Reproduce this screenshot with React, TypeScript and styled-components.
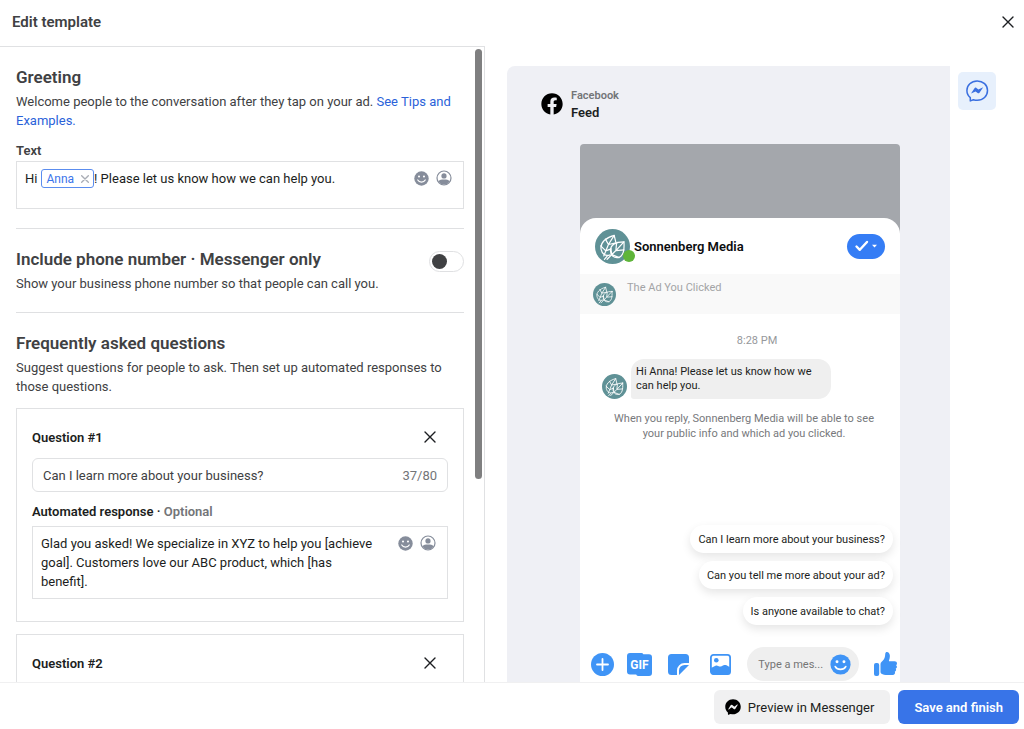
import React from "react";
import styled, { createGlobalStyle } from "styled-components";
import { FaFacebook, FaFacebookMessenger } from "react-icons/fa";

const GlobalStyle = createGlobalStyle`
  *, *::before, *::after { box-sizing: border-box; }
  body {
    margin: 0;
    background: #fff;
    color: #404143;
    font-family: Roboto, "Liberation Sans", sans-serif;
    font-size: 13px;
    line-height: 19px;
  }
  h1, h2, h3, p { margin: 0; }
  button, input, textarea { font: inherit; color: inherit; }
  svg { display: block; flex: none; }
`;

const Page = styled.div`
  display: flex;
  flex-direction: column;
  height: 100vh;
`;

const Header = styled.header`
  flex: none;
  display: flex;
  align-items: center;
  justify-content: space-between;
  height: 46px;
  padding: 0 8px 3px 12px;
`;

const Title = styled.h1`
  font-size: 15px;
  font-weight: 600;
  line-height: 20px;
`;

const IconButton = styled.button<{ $size?: number; $color?: string }>`
  flex: none;
  display: flex;
  align-items: center;
  justify-content: center;
  width: ${(p) => p.$size ?? 16}px;
  height: ${(p) => p.$size ?? 16}px;
  padding: 0;
  border: 0;
  background: none;
  color: ${(p) => p.$color ?? "#1c1e21"};
  cursor: pointer;
`;

const Main = styled.main`
  flex: 1;
  min-height: 0;
  display: grid;
  grid-template-columns: 9fr 10fr;
`;

const EditorPane = styled.div`
  display: flex;
  min-height: 0;
  overflow: hidden;
  border-top: 1px solid #e0e1e3;
  border-right: 1px solid #e0e1e3;
`;

const EditorScroll = styled.form`
  flex: 1;
  min-width: 0;
  overflow: hidden;
  padding: 0 11px 0 16px;
`;

const ScrollTrack = styled.div`
  flex: none;
  width: 9px;
  padding: 2px 2px 0 0;
`;

const ScrollThumb = styled.div`
  height: 68%;
  border-radius: 4px;
  background: #7f7f80;
`;

const Section = styled.section`
  padding: 20px 0 19px;
  & + & { border-top: 1px solid #dfe0e2; }
`;

const SectionTitle = styled.h2`
  display: block;
  margin-bottom: 4px;
  font-size: 17px;
  font-weight: 600;
  line-height: 21px;
`;

const TitleRow = styled.div`
  display: flex;
  align-items: flex-start;
  justify-content: space-between;
`;

const Link = styled.a`
  color: #2a62d9;
  text-decoration: none;
`;

const FieldLabel = styled.label<{ $inCard?: boolean }>`
  display: block;
  margin: ${(p) => (p.$inCard ? "10px 0 5px" : "11px 0 1px")};
  font-weight: 600;
  color: ${(p) => (p.$inCard ? "#1c1e21" : "inherit")};
`;

const Muted = styled.span`
  color: #737578;
`;

const TextBox = styled.div<{ $height: number }>`
  display: flex;
  align-items: flex-start;
  min-height: ${(p) => p.$height}px;
  padding: 7px 11px 7px 8px;
  border: 1px solid #e0e1e3;
  color: #1c1e21;
`;

const BareInput = styled.input`
  flex: 1;
  min-width: 0;
  height: 18px;
  padding: 0;
  border: 0;
  outline: 0;
  background: none;
`;

const BareTextarea = styled.textarea`
  flex: 1;
  min-width: 0;
  height: 57px;
  padding: 0;
  border: 0;
  outline: 0;
  resize: none;
  overflow: hidden;
`;

const Chip = styled.button`
  display: flex;
  align-items: center;
  gap: 7px;
  height: 19px;
  margin-left: 4px;
  padding: 0 4px;
  border: 1px solid #5b8def;
  border-radius: 3px;
  background: #fff;
  color: #3b74ea;
  font-size: 12px;
  line-height: 16px;
  svg { color: #a9adb5; }
`;

const BoxTools = styled.div`
  display: flex;
  gap: 7px;
  padding: 1px 0 0 18px;
`;

const Switch = styled.input`
  appearance: none;
  flex: none;
  width: 35px;
  height: 21px;
  margin: 2px 0 0;
  padding: 2px;
  border: 1px solid #dfe0e2;
  border-radius: 11px;
  background: #fff;
  &::before {
    content: "";
    display: block;
    width: 15px;
    height: 15px;
    border-radius: 50%;
    background: #404143;
  }
  &:checked::before { margin-left: auto; }
`;

const Card = styled.fieldset`
  min-width: 0;
  margin: 12px 0 0;
  padding: 16px 15px 22px;
  border: 1px solid #e0e1e3;
`;

const CardHead = styled.div`
  display: flex;
  align-items: center;
  justify-content: space-between;
  height: 24px;
  margin-bottom: 9px;
  padding-right: 10px;
`;

const CardTitle = styled.h3`
  font-size: 13px;
  font-weight: 600;
  color: #1c1e21;
`;

const InputFrame = styled.div`
  display: flex;
  align-items: center;
  height: 34px;
  padding: 0 10px;
  border: 1px solid #e0e1e3;
  border-radius: 6px;
`;

const PreviewPane = styled.div`
  display: flex;
  gap: 8px;
  min-height: 0;
  overflow: hidden;
  padding: 20px 28px 0 22px;
`;

const Preview = styled.section`
  flex: 1;
  min-width: 0;
  display: flex;
  flex-direction: column;
  border-radius: 8px 0 0 0;
  background: #eff0f5;
`;

const Placement = styled.div`
  display: flex;
  align-items: center;
  gap: 8px;
  padding: 21px 34px 23px;
  color: #1c1e21;
  font-weight: 600;
  line-height: 17px;
`;

const PlacementApp = styled.p`
  font-size: 11px;
  color: #737578;
`;

const Phone = styled.div`
  flex: 1;
  min-height: 0;
  display: flex;
  flex-direction: column;
  margin: 0 50px 0 73px;
  padding-top: 74px;
  border-radius: 4px 4px 0 0;
  background: #a4a7ac;
`;

const Sheet = styled.div`
  flex: 1;
  min-height: 0;
  display: flex;
  flex-direction: column;
  border-radius: 16px 16px 0 0;
  background: #fff;
  font-size: 11px;
  line-height: 15px;
`;

const ChatHead = styled.div`
  display: flex;
  align-items: center;
  gap: 4px;
  height: 56px;
  padding: 0 15px;
`;

const ChatName = styled.h2`
  flex: 1;
  font-size: 13px;
  font-weight: 600;
  color: #0c0d0f;
`;

const AvatarHolder = styled.div`
  position: relative;
`;

const OnlineDot = styled.span`
  position: absolute;
  right: -5px;
  bottom: 2px;
  width: 12px;
  height: 12px;
  border-radius: 50%;
  background: #5fb53a;
`;

const CheckButton = styled.button`
  display: flex;
  align-items: center;
  justify-content: center;
  width: 38px;
  height: 25px;
  padding: 0;
  border: 0;
  border-radius: 13px;
  background: #357df5;
`;

const AdStrip = styled.div`
  display: flex;
  gap: 11px;
  height: 40px;
  padding: 6px 13px;
  background: #f9f9f9;
  color: #a3a4a6;
`;

const StripAvatar = styled.div`
  padding-top: 3px;
`;

const Time = styled.p`
  padding: 19px 0 11px 34px;
  text-align: center;
  color: #96989b;
`;

const MessageRow = styled.div`
  display: flex;
  align-items: flex-end;
  gap: 4px;
  padding-left: 22px;
`;

const Bubble = styled.p`
  width: 200px;
  padding: 6px 12px 6px 5px;
  border-radius: 13px 13px 13px 3px;
  background: #efefef;
  color: #1c1e21;
  line-height: 14px;
`;

const Notice = styled.p`
  padding: 12px 20px 0 28px;
  text-align: center;
  color: #77797c;
`;

const Replies = styled.div`
  display: flex;
  flex-direction: column;
  align-items: flex-end;
  gap: 8px;
  margin-top: auto;
  padding: 0 7px 22px 0;
`;

const Reply = styled.button`
  height: 28px;
  padding: 0 8px;
  border: 0;
  border-radius: 14px;
  background: #fff;
  color: #1c1e21;
  box-shadow: 0 4px 10px rgba(0, 0, 0, 0.1);
`;

const Composer = styled.div`
  display: flex;
  align-items: center;
  justify-content: space-between;
  padding: 0 3px 1px 11px;
`;

const MessageField = styled.label`
  display: flex;
  align-items: center;
  gap: 4px;
  width: 112px;
  height: 34px;
  padding: 0 8px 0 11px;
  border-radius: 17px;
  background: #efefef;
  color: #77797c;
`;

const ChannelTab = styled.button`
  flex: none;
  display: flex;
  align-items: center;
  justify-content: center;
  width: 38px;
  height: 38px;
  margin-top: 6px;
  padding: 0;
  border: 0;
  border-radius: 5px;
  background: #e7f0fc;
  color: #3a6fe0;
`;

const Footer = styled.footer`
  flex: none;
  display: flex;
  justify-content: flex-end;
  gap: 8px;
  height: 47px;
  padding: 7px 5px 0;
  border-top: 1px solid #f0f0f1;
`;

const ActionButton = styled.button<{ $primary?: boolean }>`
  display: flex;
  align-items: center;
  gap: 7px;
  height: 34px;
  padding: ${(p) => (p.$primary ? "0 16px" : "0 16px 0 11px")};
  border: 0;
  border-radius: 6px;
  background: ${(p) => (p.$primary ? "#3874e8" : "#f0f0f1")};
  color: ${(p) => (p.$primary ? "#fff" : "#1c1e21")};
  font-weight: ${(p) => (p.$primary ? 600 : 400)};
  cursor: pointer;
`;

const CloseIcon = ({ size = 12 }: { size?: number }) => (
  <svg width={size} height={size} viewBox="0 0 12 12" fill="none" stroke="currentColor" strokeWidth={size < 12 ? 2 : 1.4} strokeLinecap="round">
    <path d="M1 1l10 10M11 1L1 11" />
  </svg>
);

const SmileIcon = ({ size = 15 }: { size?: number }) => (
  <svg width={size} height={size} viewBox="0 0 20 20">
    <circle cx="10" cy="10" r="9.6" fill="currentColor" />
    <circle cx="6.7" cy="7.4" r="1.4" fill="#fff" />
    <circle cx="13.3" cy="7.4" r="1.4" fill="#fff" />
    <path d="M5 12c2 3.6 8 3.6 10 0" fill="none" stroke="#fff" strokeWidth="1.6" strokeLinecap="round" />
  </svg>
);

const PersonIcon = () => (
  <svg width="16" height="16" viewBox="0 0 16 16">
    <circle cx="8" cy="8" r="7" fill="none" stroke="currentColor" strokeWidth="1.2" />
    <circle cx="8" cy="5.9" r="2.6" fill="currentColor" />
    <path d="M2.6 11.2c1-1.2 2.8-1.6 5.4-1.6s4.4.4 5.4 1.6A6.4 6.4 0 0 1 8 14.6a6.4 6.4 0 0 1-5.4-3.4z" fill="currentColor" />
  </svg>
);

const Avatar = ({ size }: { size: number }) => (
  <svg width={size} height={size} viewBox="0 0 104 104">
    <circle cx="52" cy="52" r="52" fill="#5f9196" />
    <g fill="none" stroke="#fff" strokeWidth="3.6" strokeLinejoin="round" strokeLinecap="round">
      <path d="M45 77c-14 5-24-2-27-17-2-17 9-32 39-41l5 21" />
      <path d="M57 19L40 46 26 80M31 30l9 16 20-4M17 50l15 15 16-6" />
      <path d="M86 38c-24 0-40 9-40 26 0 14 10 23 23 21 14-3 19-19 17-47z" />
      <path d="M86 38L62 64 36 90M64 43l-2 21 24-2M47 58l3 18 22 9M28 90l8-9" />
    </g>
  </svg>
);

const MessengerOutline = () => (
  <svg width="24" height="24" viewBox="0 0 24 24">
    <path d="M12.2 1.9C6.300 1.900 1.900 6.100 1.900 11.500c0 2.900 1.300 5.400 3.400 7.100v3.300l3.100-1.200c1.200.4 2.500.6 3.800.6 5.900 0 10.300-4.300 10.300-9.800S18.100 1.900 12.200 1.900z" fill="none" stroke="currentColor" strokeWidth="1.5" strokeLinejoin="round" />
    <path d="M6 14.600l3.500-5.400c.5-.7 1.300-.8 1.900-.3l2 1.600 4.800-2.300-3.700 5.500c-.5.7-1.300.8-1.900.3l-2-1.600z" fill="currentColor" />
  </svg>
);

const PlusIcon = () => (
  <svg width="23" height="23" viewBox="0 0 23 23">
    <circle cx="11.5" cy="11.5" r="11.5" fill="#3f94f6" />
    <path d="M11.5 6v11M6 11.5h11" stroke="#fff" strokeWidth="1.8" strokeLinecap="round" />
  </svg>
);

const GifIcon = () => (
  <svg width="25" height="23" viewBox="0 0 25 23">
    <path d="M3 0h11.500a2 2 0 0 1 1.800 1.300H22a3 3 0 0 1 3 3V20a3 3 0 0 1-3 3H11a2 2 0 0 1-1.800-1.500H3a3 3 0 0 1-3-3V3a3 3 0 0 1 3-3z" fill="#3f94f6" />
    <text x="12.5" y="16" textAnchor="middle" fill="#fff" fontFamily="Roboto, sans-serif" fontSize="12" fontWeight="700">GIF</text>
  </svg>
);

const StickerIcon = () => (
  <svg width="21" height="21" viewBox="0 0 21 21" fill="#3f94f6">
    <path d="M3.500 0h14A3.500 3.500 0 0 1 21 3.500V9h-4.500A7.500 7.500 0 0 0 9 16.500V21H3.500A3.500 3.500 0 0 1 0 17.500v-14A3.500 3.500 0 0 1 3.500 0z" />
    <path d="M21 11h-4.500a5.500 5.500 0 0 0-5.500 5.500V21z" />
  </svg>
);

const PhotoIcon = () => (
  <svg width="21" height="21" viewBox="0 0 21 21">
    <rect x="0.9" y="0.9" width="19.2" height="19.2" rx="2.6" fill="#fff" stroke="#3f94f6" strokeWidth="1.8" />
    <circle cx="6.3" cy="6.3" r="2.3" fill="#3f94f6" />
    <path d="M1 14l4.500-2.200c1-.5 1.800-.3 2.700.2 1.300.8 2.500.8 3.800.1l1.500-.8c1-.5 2-.5 3 0L20 13.200v5.300a2 2 0 0 1-2 2H3a2 2 0 0 1-2-2z" fill="#3f94f6" />
  </svg>
);

const ThumbIcon = () => (
  <svg width="23" height="24" viewBox="0 0 23 24" fill="#3f94f6">
    <rect x="0" y="11" width="5.2" height="13" rx="2" />
    <path d="M6.500 12c0-1 .4-1.700 1.200-2.300C9.600 8.200 10.700 6.500 11 4.200l.3-2.600C11.400.5 12 0 12.900 0c1.800 0 3 1.800 3 4 0 1.700-.4 3-.9 4.400-.2.600.1.900.6.900h5c1.400 0 2.400.9 2.400 2.100 0 .8-.3 1.400-.9 1.800.6.400.8 1 .8 1.600 0 .9-.5 1.600-1.200 1.900.4.400.5.900.4 1.400-.1.800-.6 1.300-1.300 1.600.2.400.3.800.2 1.200-.2 1.400-1.300 2.100-3 2.100h-4.200c-3 0-5-.5-6.300-1.300-.7-.4-1-1-1-1.800z" />
  </svg>
);

const FieldTools = () => (
  <BoxTools>
    <IconButton type="button" $color="#868d9b" aria-label="Add emoji"><SmileIcon /></IconButton>
    <IconButton type="button" $color="#868d9b" aria-label="Add name"><PersonIcon /></IconButton>
  </BoxTools>
);

const Question = ({ number, question, response }: { number: number; question: string; response: string }) => (
  <Card aria-labelledby={`q${number}-title`}>
    <CardHead>
      <CardTitle id={`q${number}-title`}>Question #{number}</CardTitle>
      <IconButton type="button" aria-label={`Remove question ${number}`}><CloseIcon /></IconButton>
    </CardHead>
    <InputFrame>
      <BareInput aria-label={`Question ${number}`} defaultValue={question} />
      <Muted>{question.length}/80</Muted>
    </InputFrame>
    <FieldLabel $inCard htmlFor={`q${number}-response`}>
      Automated response · <Muted>Optional</Muted>
    </FieldLabel>
    <TextBox $height={73}>
      <BareTextarea id={`q${number}-response`} defaultValue={response} />
      <FieldTools />
    </TextBox>
  </Card>
);

const replies = [
  "Can I learn more about your business?",
  "Can you tell me more about your ad?",
  "Is anyone available to chat?",
];

export default function App() {
  return (
    <Page>
      <GlobalStyle />
      <Header>
        <Title>Edit template</Title>
        <IconButton aria-label="Close"><CloseIcon /></IconButton>
      </Header>
      <Main>
        <EditorPane>
          <EditorScroll>
            <Section>
              <SectionTitle>Greeting</SectionTitle>
              <p>
                Welcome people to the conversation after they tap on your ad.{" "}
                <Link href="#tips">See Tips and Examples.</Link>
              </p>
              <FieldLabel htmlFor="greeting">Text</FieldLabel>
              <TextBox $height={48}>
                <span>Hi</span>
                <Chip type="button">Anna <CloseIcon size={8} /></Chip>
                <BareInput id="greeting" defaultValue="! Please let us know how we can help you." />
                <FieldTools />
              </TextBox>
            </Section>
            <Section>
              <TitleRow>
                <div>
                  <SectionTitle as="label" htmlFor="phone">Include phone number · Messenger only</SectionTitle>
                  <p>Show your business phone number so that people can call you.</p>
                </div>
                <Switch id="phone" type="checkbox" role="switch" />
              </TitleRow>
            </Section>
            <Section>
              <SectionTitle>Frequently asked questions</SectionTitle>
              <p>Suggest questions for people to ask. Then set up automated responses to those questions.</p>
              <Question
                number={1}
                question="Can I learn more about your business?"
                response="Glad you asked! We specialize in XYZ to help you [achieve goal]. Customers love our ABC product, which [has benefit]."
              />
              <Question number={2} question="Can you tell me more about your ad?" response="" />
            </Section>
          </EditorScroll>
          <ScrollTrack><ScrollThumb /></ScrollTrack>
        </EditorPane>
        <PreviewPane>
          <Preview>
            <Placement>
              <FaFacebook size={22} color="#000" />
              <div>
                <PlacementApp>Facebook</PlacementApp>
                <p>Feed</p>
              </div>
            </Placement>
            <Phone>
              <Sheet>
                <ChatHead>
                  <AvatarHolder><Avatar size={35} /><OnlineDot /></AvatarHolder>
                  <ChatName>Sonnenberg Media</ChatName>
                  <CheckButton aria-label="Conversation status">
                    <svg width="24" height="12" viewBox="0 0 24 12">
                      <path d="M2.500 6.500l3.300 3.300L13 2" fill="none" stroke="#fff" strokeWidth="2.4" strokeLinecap="round" strokeLinejoin="round" />
                      <path d="M18 4.800h5L20.500 7.600z" fill="#fff" />
                    </svg>
                  </CheckButton>
                </ChatHead>
                <AdStrip>
                  <StripAvatar><Avatar size={23} /></StripAvatar>
                  <span>The Ad You Clicked</span>
                </AdStrip>
                <Time>8:28 PM</Time>
                <MessageRow>
                  <Avatar size={25} />
                  <Bubble>Hi Anna! Please let us know how we can help you.</Bubble>
                </MessageRow>
                <Notice>When you reply, Sonnenberg Media will be able to see your public info and which ad you clicked.</Notice>
                <Replies>
                  {replies.map((text) => <Reply key={text}>{text}</Reply>)}
                </Replies>
                <Composer>
                  <IconButton $size={23} aria-label="More"><PlusIcon /></IconButton>
                  <IconButton $size={21} aria-label="Send GIF"><GifIcon /></IconButton>
                  <IconButton $size={29} aria-label="Send sticker"><StickerIcon /></IconButton>
                  <IconButton $size={25} aria-label="Send photo"><PhotoIcon /></IconButton>
                  <MessageField>
                    <BareInput aria-label="Message" placeholder="Type a mes..." />
                    <IconButton $size={21} $color="#3f94f6" aria-label="Emoji"><SmileIcon size={21} /></IconButton>
                  </MessageField>
                  <IconButton $size={23} aria-label="Like"><ThumbIcon /></IconButton>
                </Composer>
              </Sheet>
            </Phone>
          </Preview>
          <ChannelTab aria-label="Messenger preview"><MessengerOutline /></ChannelTab>
        </PreviewPane>
      </Main>
      <Footer>
        <ActionButton><FaFacebookMessenger size={16} color="#000" />Preview in Messenger</ActionButton>
        <ActionButton $primary>Save and finish</ActionButton>
      </Footer>
    </Page>
  );
}
